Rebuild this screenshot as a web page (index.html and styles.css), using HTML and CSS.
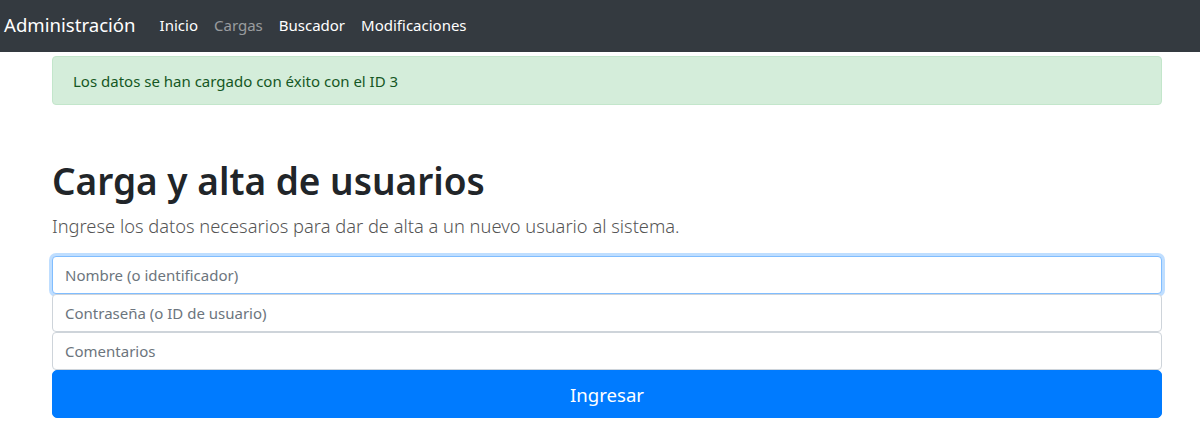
FILE: index.html
```html
<!DOCTYPE html>
<html lang="es">
<head>
<meta charset="utf-8">
<title>Administración</title>
<link rel="stylesheet" href="styles.css">
</head>
<body>
<nav class="navbar">
  <a class="brand" href="#">Administración</a>
  <ul class="nav">
    <li><a class="nav-link" href="#">Inicio</a></li>
    <li><a class="nav-link muted" href="#">Cargas</a></li>
    <li><a class="nav-link" href="#">Buscador</a></li>
    <li><a class="nav-link" href="#">Modificaciones</a></li>
  </ul>
</nav>
<main class="container">
  <div class="alert">Los datos se han cargado con éxito con el ID 3</div>
  <h1 class="title">Carga y alta de usuarios</h1>
  <p class="lead">Ingrese los datos necesarios para dar de alta a un nuevo usuario al sistema.</p>
  <form class="form">
    <input class="field focus" type="text" placeholder="Nombre (o identificador)">
    <input class="field" type="text" placeholder="Contraseña (o ID de usuario)">
    <input class="field" type="text" placeholder="Comentarios">
    <button class="btn" type="button">Ingresar</button>
  </form>
</main>
</body>
</html>
```
FILE: styles.css
```css
* { box-sizing: border-box; }
html, body { margin: 0; padding: 0; }
body {
  font-family: "Noto Sans", "Open Sans", sans-serif;
  color: #212529;
  background: #fff;
  font-size: 15px;
  line-height: 24px;
}
.navbar {
  background: #343a40;
  height: 52px;
  display: flex;
  align-items: center;
  padding: 0 4px 2px;
}
.brand {
  color: #fff;
  text-decoration: none;
  font-size: 18.6px;
  margin-right: 16px;
}
.nav {
  display: flex;
  list-style: none;
  margin: 0;
  padding: 0;
}
.nav-link {
  display: block;
  padding: 8px;
  color: #fff;
  text-decoration: none;
  font-size: 15px;
}
.nav-link.muted { color: rgba(255,255,255,.5); }
.container {
  width: 1110px;
  margin-left: 52px;
  padding-top: 4px;
}
.alert {
  background: #d4edda;
  border: 1px solid #c3e6cb;
  color: #155724;
  border-radius: 4px;
  padding: 12px 20px;
  height: 49px;
}
.title {
  font-size: 37px;
  font-weight: 600;
  line-height: 48px;
  margin: 52px 0 6px;
}
.lead {
  font-size: 18.3px;
  font-weight: 300;
  line-height: 30px;
  color: #555;
  margin: 0 0 15px;
}
.form { display: flex; flex-direction: column; }
.field {
  height: 38px;
  border: 1px solid #ced4da;
  border-radius: 4px;
  padding: 6px 12px;
  font-family: inherit;
  font-size: 15px;
  color: #495057;
  background: #fff;
}
.field::placeholder { color: #6c757d; }
.field.focus {
  border-color: #80bdff;
  box-shadow: 0 0 0 3px rgba(0,123,255,.25);
  outline: none;
}
.btn {
  height: 48px;
  background: #007bff;
  color: #fff;
  border: 1px solid #007bff;
  border-radius: 5px;
  font-family: inherit;
  font-size: 18.6px;
}
```
